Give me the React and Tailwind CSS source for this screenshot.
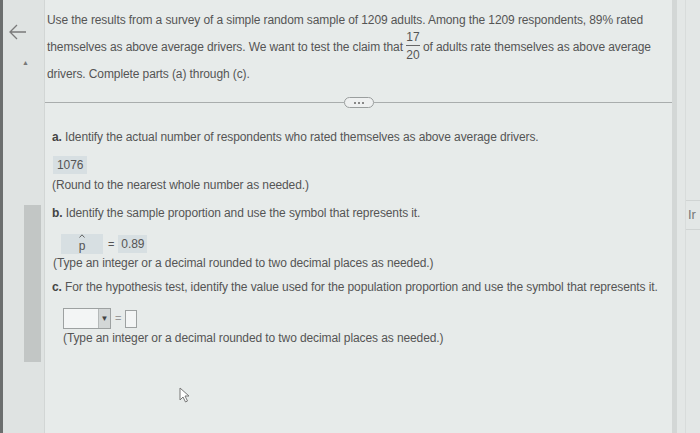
import React from 'react';

const Frac = ({ top, bottom }) => (
  <span className="inline-flex flex-col items-center align-middle mx-[3px] -my-[12px] leading-none -translate-y-[2px]">
    <span className="pb-[2px]">{top}</span>
    <span className="w-[14px] border-t border-[#666]"></span>
    <span className="pt-[3px]">{bottom}</span>
  </span>
);

const PHat = () => (
  <span className="relative inline-flex flex-col items-center leading-none">
    <svg width="6" height="4" viewBox="0 0 6 4" className="mb-[2px]">
      <path d="M0.5 3.5 L3 0.8 L5.5 3.5" fill="none" stroke="#555" strokeWidth="0.9" />
    </svg>
    <span>p</span>
  </span>
);

const Cursor = () => (
  <svg width="12" height="16" viewBox="0 0 12 16" className="ml-[127px] mt-[41px]">
    <path d="M1 1 L1 13 L4 10 L6.5 15 L8.5 14 L6 9 L10 9 Z" fill="#fff" stroke="#777" strokeWidth="1" />
  </svg>
);

export default function App() {
  return (
    <div
      className="w-[700px] h-[433px] flex bg-[#e7ebea] text-[#555] text-[12px] tracking-[-0.1px] overflow-hidden"
      style={{ fontFamily: '"Liberation Sans", Arial, sans-serif' }}
    >
      {/* left rail */}
      <div className="w-[45px] shrink-0 flex flex-col border-l-[3px] border-[#6b6e6e] bg-[#dfe3e2] border-r border-r-[#d2d6d5]">
        <div className="pt-[22px] pl-[5px]">
          <svg width="20" height="20" viewBox="0 0 20 20">
            <path d="M18 10 H3 M9 3 L2 10 L9 17" fill="none" stroke="#7a7a7a" strokeWidth="1.3" />
          </svg>
        </div>
        <div className="pl-[19px] pt-[16px] text-[7px] text-[#777]">▲</div>
        <div className="ml-[21px] mt-[136px] w-[17px] h-[157px] bg-[#c2c6c5]"></div>
      </div>

      {/* main */}
      <div className="flex-1 flex flex-col">
        <div className="pl-[2px] pt-[7px] leading-[27px] whitespace-nowrap">
          <p>Use the results from a survey of a simple random sample of 1209 adults. Among the 1209 respondents, 89% rated</p>
          <p>
            themselves as above average drivers. We want to test the claim that
            <Frac top="17" bottom="20" />
            of adults rate themselves as above average
          </p>
          <p>drivers. Complete parts (a) through (c).</p>
        </div>

        <div className="mt-[9px] flex items-center">
          <div className="flex-1 border-t border-[#a9adad]"></div>
          <div className="w-[30px] h-[11px] rounded-full border border-[#9a9e9e] bg-[#eef0f0] flex items-center justify-center gap-[2px]">
            <span className="w-[2px] h-[2px] bg-[#666] rounded-full"></span>
            <span className="w-[2px] h-[2px] bg-[#666] rounded-full"></span>
            <span className="w-[2px] h-[2px] bg-[#666] rounded-full"></span>
          </div>
          <div className="flex-1 border-t border-[#a9adad]"></div>
        </div>

        <div className="pl-[7px] whitespace-nowrap">
          <p className="mt-[21px] leading-[16px]">
            <span className="font-bold text-[#444]">a.</span> Identify the actual number of respondents who rated themselves as above average drivers.
          </p>
          <div className="mt-[11px] ml-[1px] inline-flex">
            <span className="bg-[#d7dfe2] px-[4px] py-[1px] leading-[16px]">1076</span>
          </div>
          <p className="mt-[3px] leading-[16px]">(Round to the nearest whole number as needed.)</p>

          <p className="mt-[12px] leading-[16px]">
            <span className="font-bold text-[#444]">b.</span> Identify the sample proportion and use the symbol that represents it.
          </p>
          <div className="mt-[13px] ml-[9px] flex items-center">
            <span className="w-[42px] h-[20px] bg-[#d7dfe2] flex items-end justify-center pb-[2px]">
              <PHat />
            </span>
            <span className="ml-[5px] mr-[4px] text-[11px]">=</span>
            <span className="bg-[#d7dfe2] px-[3px] leading-[18px]">0.89</span>
          </div>
          <p className="mt-[1px] ml-[1px] leading-[16px]">(Type an integer or a decimal rounded to two decimal places as needed.)</p>

          <p className="mt-[8px] leading-[16px]">
            <span className="font-bold text-[#444]">c.</span> For the hypothesis test, identify the value used for the population proportion and use the symbol that represents it.
          </p>
          <div className="mt-[13px] ml-[11px] flex items-center">
            <div className="w-[48px] h-[21px] border border-[#9da1a1] bg-[#f3f5f5] flex justify-end">
              <span className="w-[12px] bg-[#d3d7d7] flex items-center justify-center text-[8px] text-[#444] border-l border-[#b5b9b9]">▼</span>
            </div>
            <span className="mx-[4px] text-[11px] text-[#999]">=</span>
            <div className="w-[12px] h-[18px] border border-[#9da1a1] bg-[#f3f5f5]"></div>
          </div>
          <p className="mt-[1px] ml-[11px] leading-[16px]">(Type an integer or a decimal rounded to two decimal places as needed.)</p>
          <Cursor />
        </div>
      </div>

      {/* right panel */}
      <div className="w-[28px] shrink-0 flex border-l-[5px] border-[#d3d7d6] bg-[#e3e7e6]">
        <div className="w-[9px] border-r border-[#d8dcdb]"></div>
        <div className="flex-1 flex flex-col">
          <div className="mt-[200px] border-t border-[#d0d4d3]"></div>
          <div className="text-[13px] text-[#777] pt-[6px] pl-[2px] leading-[16px]">Ir</div>
          <div className="mt-[6px] border-t border-[#d0d4d3]"></div>
        </div>
      </div>
    </div>
  );
}
